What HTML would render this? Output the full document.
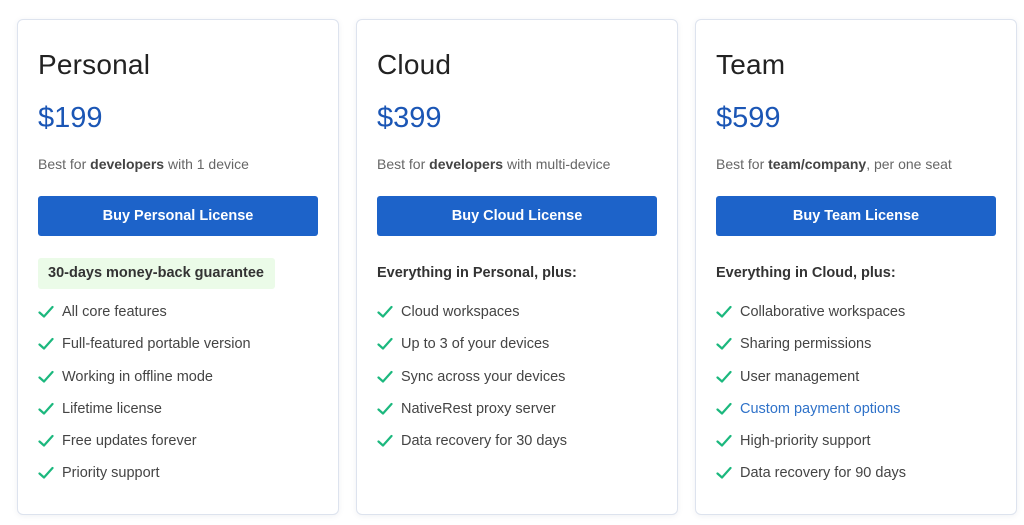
<!DOCTYPE html>
<html><head><style>
*{margin:0;padding:0;box-sizing:border-box}
body{width:1024px;height:525px;background:#fff;font-family:"Liberation Sans",sans-serif;position:relative;overflow:hidden}
.card{position:absolute;top:19px;width:322px;height:496px;border:1px solid #dde3ee;border-radius:6px;background:#fff;box-shadow:0 1px 6px rgba(60,80,120,.08);padding:0 20px}
h2{position:absolute;left:20px;top:29px;font-size:28px;font-weight:normal;color:#222;letter-spacing:.2px}
.price{position:absolute;left:20px;top:82px;font-size:29px;color:#1b56b5}
.desc{position:absolute;left:20px;top:136px;font-size:14px;color:#666}
.desc b{color:#444}
.btn{position:absolute;left:20px;top:176px;width:280px;height:40px;background:#1d63c9;border-radius:3px;color:#fff;font-size:14.5px;font-weight:bold;text-align:center;line-height:40px}
.sub{position:absolute;left:20px;top:245px;font-size:14.5px;font-weight:bold;color:#333}
.badge{position:absolute;left:20px;top:238px;width:237px;height:31px;background:#ebfbe8;border-radius:3px;font-size:14.5px;font-weight:bold;color:#333;line-height:31px;padding-left:10px}
ul{position:absolute;left:20px;top:282px;list-style:none}
li{height:32.3px;font-size:14.5px;color:#444;position:relative;padding-left:24px;line-height:20px}
li svg{position:absolute;left:0;top:3px}
li.blue{color:#2f72c9}
</style></head><body>
<svg width="0" height="0" style="position:absolute"><symbol id="c" viewBox="0 0 16 14"><path d="M1.5 7.5 L6 11.5 L14.5 2" fill="none" stroke="#1cb87e" stroke-width="2.2" stroke-linecap="round" stroke-linejoin="round"/></symbol></svg>

<div class="card" style="left:17px">
<h2>Personal</h2><div class="price">$199</div>
<div class="desc">Best for <b>developers</b> with 1 device</div>
<div class="btn">Buy Personal License</div>
<div class="badge">30-days money-back guarantee</div>
<ul>
<li><svg width="16" height="14"><use href="#c"/></svg>All core features</li>
<li><svg width="16" height="14"><use href="#c"/></svg>Full-featured portable version</li>
<li><svg width="16" height="14"><use href="#c"/></svg>Working in offline mode</li>
<li><svg width="16" height="14"><use href="#c"/></svg>Lifetime license</li>
<li><svg width="16" height="14"><use href="#c"/></svg>Free updates forever</li>
<li><svg width="16" height="14"><use href="#c"/></svg>Priority support</li>
</ul></div>

<div class="card" style="left:356px">
<h2>Cloud</h2><div class="price">$399</div>
<div class="desc">Best for <b>developers</b> with multi-device</div>
<div class="btn">Buy Cloud License</div>
<div class="sub">Everything in Personal, plus:</div>
<ul>
<li><svg width="16" height="14"><use href="#c"/></svg>Cloud workspaces</li>
<li><svg width="16" height="14"><use href="#c"/></svg>Up to 3 of your devices</li>
<li><svg width="16" height="14"><use href="#c"/></svg>Sync across your devices</li>
<li><svg width="16" height="14"><use href="#c"/></svg>NativeRest proxy server</li>
<li><svg width="16" height="14"><use href="#c"/></svg>Data recovery for 30 days</li>
</ul></div>

<div class="card" style="left:695px">
<h2>Team</h2><div class="price">$599</div>
<div class="desc">Best for <b>team/company</b>, per one seat</div>
<div class="btn">Buy Team License</div>
<div class="sub">Everything in Cloud, plus:</div>
<ul>
<li><svg width="16" height="14"><use href="#c"/></svg>Collaborative workspaces</li>
<li><svg width="16" height="14"><use href="#c"/></svg>Sharing permissions</li>
<li><svg width="16" height="14"><use href="#c"/></svg>User management</li>
<li class="blue"><svg width="16" height="14"><use href="#c"/></svg>Custom payment options</li>
<li><svg width="16" height="14"><use href="#c"/></svg>High-priority support</li>
<li><svg width="16" height="14"><use href="#c"/></svg>Data recovery for 90 days</li>
</ul></div>
</body></html>
